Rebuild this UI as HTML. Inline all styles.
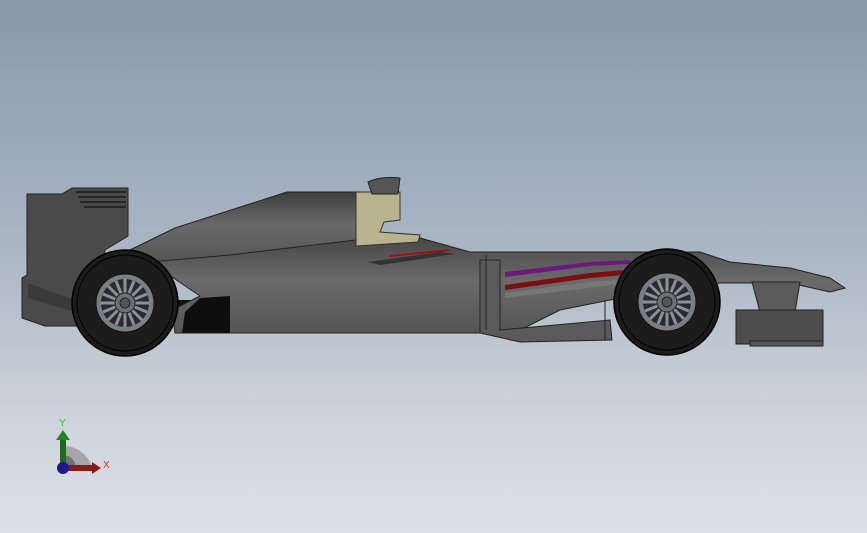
<!DOCTYPE html>
<html><head><meta charset="utf-8"><style>
html,body{margin:0;padding:0;width:867px;height:533px;overflow:hidden}
body{background:linear-gradient(#8898ad 0%,#a9b5c3 45%,#cfd5dd 80%,#dde1e7 100%)}
svg{position:absolute;left:0;top:0}
</style></head><body>
<svg width="867" height="533" viewBox="0 0 867 533">
<defs>
<linearGradient id="bd" x1="0" y1="0" x2="0" y2="1">
<stop offset="0" stop-color="#474747"/><stop offset="0.45" stop-color="#6a6a6a"/><stop offset="1" stop-color="#555"/></linearGradient>
<linearGradient id="eng" x1="0" y1="0" x2="0" y2="1">
<stop offset="0" stop-color="#3e3e3e"/><stop offset="0.4" stop-color="#6a6a6a"/><stop offset="1" stop-color="#4c4c4c"/></linearGradient>
<g id="wheel">
<circle r="53" fill="#1c1c1c" stroke="#000" stroke-width="1.5"/>
<circle r="48" fill="none" stroke="#000" stroke-width="1"/>
<circle r="29" fill="#7c7e86" stroke="#111" stroke-width="1"/>
<circle r="24" fill="#2a2a2e"/>
<g stroke="#8e9098" stroke-width="3">
<line x1="0" y1="-24" x2="0" y2="24"/><line x1="-24" y1="0" x2="24" y2="0"/>
<line x1="-17" y1="-17" x2="17" y2="17"/><line x1="17" y1="-17" x2="-17" y2="17"/>
<line x1="-9" y1="-22" x2="9" y2="22"/><line x1="9" y1="-22" x2="-9" y2="22"/>
<line x1="-22" y1="-9" x2="22" y2="9"/><line x1="22" y1="-9" x2="-22" y2="9"/>
</g>
<circle r="10" fill="#6e7078" stroke="#222"/>
<circle r="5" fill="#555" stroke="#222"/>
</g>
</defs>
<!-- rear wing -->
<path d="M27 194 L62 194 L72 188 L128 188 L128 236 L105 250 L100 290 L78 326 L45 326 L22 318 L22 278 L27 275 Z" fill="#4a4a4a" stroke="#222" stroke-width="1"/>
<g stroke="#111" stroke-width="1.2"><line x1="76" y1="192" x2="126" y2="192"/><line x1="78" y1="197" x2="126" y2="197"/><line x1="80" y1="202" x2="126" y2="202"/><line x1="84" y1="207" x2="126" y2="207"/></g>
<path d="M28 283 L75 300 L75 312 L28 298 Z" fill="#3a3a3a"/>
<!-- rear floor / diffuser -->
<path d="M170 300 L230 300 L230 333 L175 333 Z" fill="#111"/>
<!-- engine cover -->
<path d="M130 250 L175 228 L287 192 L356 192 L356 246 L300 252 L200 270 L160 275 Z" fill="url(#eng)" stroke="#222" stroke-width="1"/>
<!-- main body -->
<path d="M150 262 L230 255 L356 240 L420 238 L470 252 L700 252 L730 262 L790 268 L830 278 L845 288 L830 292 L790 283 L720 283 L610 300 L560 310 L520 330 L480 333 L175 333 L172 310 L200 296 Z" fill="url(#bd)" stroke="#222" stroke-width="1"/>
<path d="M200 298 L230 296 L230 333 L182 333 L185 312 Z" fill="#0e0e0e"/>
<!-- under nose -->
<path d="M480 260 L500 260 L500 330 L610 320 L612 340 L520 342 L480 333 Z" fill="#5a5a5a" stroke="#222" stroke-width="1"/>
<line x1="605" y1="300" x2="605" y2="340" stroke="#222"/>
<line x1="486" y1="255" x2="486" y2="330" stroke="#222"/>
<!-- stripes -->
<path d="M505 272 L590 262 L630 260 L630 264 L590 266 L505 277 Z" fill="#6a1a7a"/>
<path d="M505 285 L590 273 L625 270 L625 275 L590 278 L505 290 Z" fill="#7a1010"/>
<path d="M505 293 L590 282 L620 280 L620 284 L505 298 Z" fill="#777"/>
<!-- airbox -->
<path d="M356 192 L400 192 L400 220 L384 222 L380 232 L420 235 L418 242 L356 246 Z" fill="#b9b48e" stroke="#333" stroke-width="1"/>
<path d="M368 182 Q380 176 400 178 L398 194 L372 194 Z" fill="#555" stroke="#222"/>
<path d="M368 262 L440 252 L455 254 L380 265 Z" fill="#333"/>
<path d="M390 256 L450 250" stroke="#a01010" stroke-width="2"/>
<!-- front wing -->
<path d="M752 282 L800 282 L795 312 L760 312 Z" fill="#5a5a5a" stroke="#222"/>
<rect x="736" y="310" width="87" height="34" fill="#4d4d4d" stroke="#222"/>
<rect x="750" y="341" width="73" height="5" fill="#555" stroke="#222"/>
<!-- wheels -->
<use href="#wheel" x="125" y="303"/>
<use href="#wheel" x="667" y="302"/>
<!-- axis triad -->
<path d="M63 446 L63 468 L92 468 A29 29 0 0 0 63 446 Z" fill="#a4a6aa"/>
<path d="M63 455 L63 468 L76 468 A13 13 0 0 0 63 455 Z" fill="#707276"/>
<rect x="60" y="438" width="6" height="30" fill="#1c6a1c"/>
<path d="M56 440 L63 430 L70 440 Z" fill="#1c8a1c"/>
<rect x="63" y="465" width="30" height="6" fill="#8a1a1a"/>
<path d="M92 462 L101 468 L92 474 Z" fill="#8a1a1a"/>
<circle cx="63" cy="468" r="6" fill="#1a1a8a"/>
<text x="59" y="426" font-family="Liberation Sans,sans-serif" font-size="10" fill="#2c2">Y</text>
<text x="103" y="468" font-family="Liberation Sans,sans-serif" font-size="10" fill="#e22">X</text>
</svg>
</body></html>
